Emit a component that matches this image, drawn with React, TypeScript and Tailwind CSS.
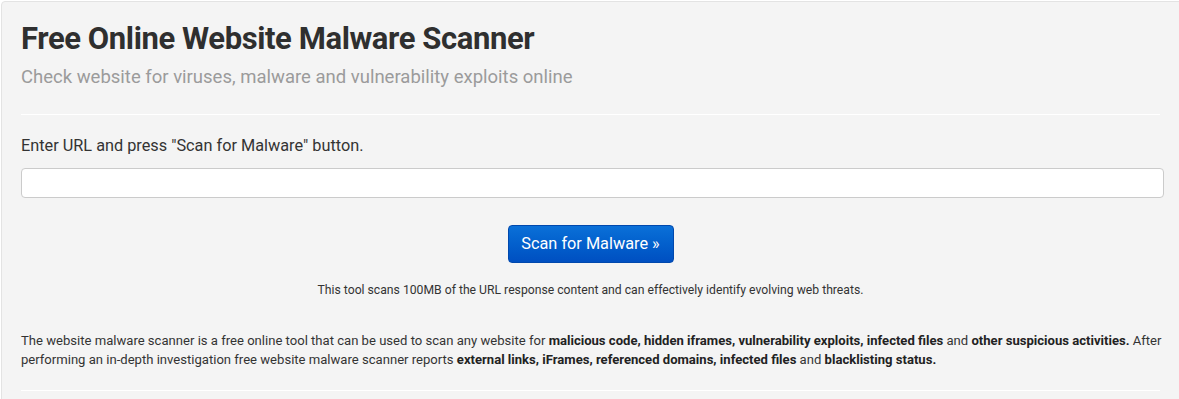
import React from "react";

export default function App() {
  return (
    <div
      className="w-[1179px] h-[399px] overflow-hidden bg-white"
      style={{ fontFamily: "Roboto, 'Liberation Sans', sans-serif" }}
    >
      <div className="ml-px mt-px w-[1200px] min-h-[420px] rounded-[4px] border border-[#e3e3e3] bg-[#f4f4f4] pl-[19px] pt-[20px]">
        <div className="w-[1139px]">
          <h1 className="text-[31px] leading-[34px] font-bold tracking-[-0.4px] text-[#2f2f2f]">
            Free Online Website Malware Scanner
          </h1>
          <p className="mt-[9px] text-[18.5px] leading-[24px] text-[#9b9b9b]">
            Check website for viruses, malware and vulnerability exploits online
          </p>
          <hr className="mt-[25px] border-0 border-t border-white" />
          <p className="mt-[20px] text-[16.3px] leading-[22px] text-[#333]">
            Enter URL and press "Scan for Malware" button.
          </p>
          <input
            type="text"
            className="mt-[11px] block h-[30px] w-[1143px] rounded-[4px] border border-[#cbcbcb] bg-white px-2 text-[14px] outline-none"
          />
          <div className="mt-[27px] flex justify-center">
            <button className="h-[38px] w-[166px] rounded-[4px] border border-[#0048ad] bg-gradient-to-b from-[#0b70d8] to-[#004fc1] text-[16.3px] text-white">
              Scan for Malware »
            </button>
          </div>
          <p className="mt-[19px] text-center text-[12.2px] leading-[17px] text-[#333]">
            This tool scans 100MB of the URL response content and can effectively identify evolving web threats.
          </p>
          <p className="mt-[32px] whitespace-nowrap text-[13.08px] leading-[19px] text-[#333]">
            The website malware scanner is a free online tool that can be used to scan any website for{" "}
            <b className="font-bold text-[#222]">malicious code, hidden iframes, vulnerability exploits, infected files</b> and{" "}
            <b className="font-bold text-[#222]">other suspicious activities.</b> After
            <br />
            performing an in-depth investigation free website malware scanner reports{" "}
            <b className="font-bold text-[#222]">external links, iFrames, referenced domains, infected files</b> and{" "}
            <b className="font-bold text-[#222]">blacklisting status.</b>
          </p>
          <hr className="mt-[21px] border-0 border-t border-white" />
        </div>
      </div>
    </div>
  );
}
